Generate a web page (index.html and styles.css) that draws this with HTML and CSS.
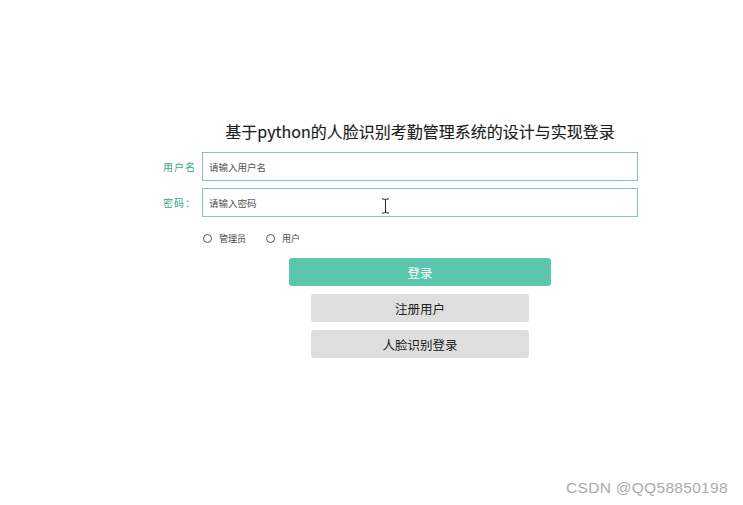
FILE: index.html
```html
<!DOCTYPE html>
<html lang="zh">
<head>
<meta charset="utf-8">
<title>登录</title>
<link rel="stylesheet" href="styles.css">
</head>
<body>
<div class="page">
  <div class="form">
    <h1 class="title">基于python的人脸识别考勤管理系统的设计与实现登录</h1>
    <label class="label">用户名</label>
    <div class="input"><span class="ph">请输入用户名</span></div>
    <label class="label">密码：</label>
    <div class="input"><span class="ph">请输入密码</span></div>
    <div class="roles">
      <span class="role"><span class="radio"></span>管理员</span>
      <span class="role"><span class="radio"></span>用户</span>
    </div>
    <div class="buttons">
      <div class="btn primary">登录</div>
      <div class="btn gray">注册用户</div>
      <div class="btn gray">人脸识别登录</div>
    </div>
  </div>
  <svg class="cursor" width="9" height="16" viewBox="0 0 9 16"><path d="M1 1h2.5M5.5 1H8M4.5 1.5v13M1 15h2.5M5.5 15H8M3.5 1.5h2M3.5 14.5h2" stroke="#222" stroke-width="1" fill="none"/></svg>
  <div class="watermark">CSDN @QQ58850198</div>
</div>
</body>
</html>
```
FILE: styles.css
```css
* { box-sizing: border-box; }
html, body { margin: 0; padding: 0; background: #fff; }
body { font-family: "Noto Sans CJK SC", "Noto Sans", sans-serif; }
.page { position: relative; width: 743px; height: 505px; overflow: hidden; }
.form {
  display: grid;
  grid-template-columns: 39px 436px;
  row-gap: 7px;
  margin-left: 163px;
  padding-top: 117px;
  align-items: center;
}
.title {
  grid-column: 2;
  margin: 0;
  font-size: 16px;
  font-weight: 400;
  color: #1e1e1e;
  text-align: center;
  line-height: 28px;
  text-shadow: 0 0 1px rgba(0,0,0,0.25);
}
.label {
  grid-column: 1;
  font-size: 10px;
  color: #3aa58a;
  letter-spacing: 1px;
  line-height: 14px;
}
.input {
  grid-column: 2;
  height: 29px;
  border: 1px solid #7fc5c0;
  padding-left: 6px;
  display: flex;
  align-items: center;
}
.ph { font-size: 9.5px; color: #555; }
.roles {
  grid-column: 2;
  display: flex;
  gap: 19px;
  margin-top: 8px;
  font-size: 9px;
  line-height: 13px;
  color: #444;
}
.role { display: flex; align-items: center; gap: 7px; }
.radio {
  width: 9px; height: 9px;
  border: 1px solid #555;
  border-radius: 50%;
  margin-left: 1px;
}
.buttons {
  grid-column: 2;
  display: flex;
  flex-direction: column;
  align-items: center;
  gap: 8px;
  margin-top: 6px;
}
.btn {
  height: 28px;
  display: flex;
  align-items: center;
  justify-content: center;
  font-size: 12.5px;
  border-radius: 3px;
}
.primary { width: 262px; background: #5bc6ad; color: #fff; }
.gray { width: 218px; background: #dedede; color: #222; }
.cursor { position: absolute; left: 381px; top: 198px; }
.watermark {
  position: absolute;
  left: 566px;
  top: 479px;
  font-family: "Liberation Sans", Arial, sans-serif;
  font-size: 15.5px;
  color: #ababab;
  letter-spacing: 0.3px;
}
```
